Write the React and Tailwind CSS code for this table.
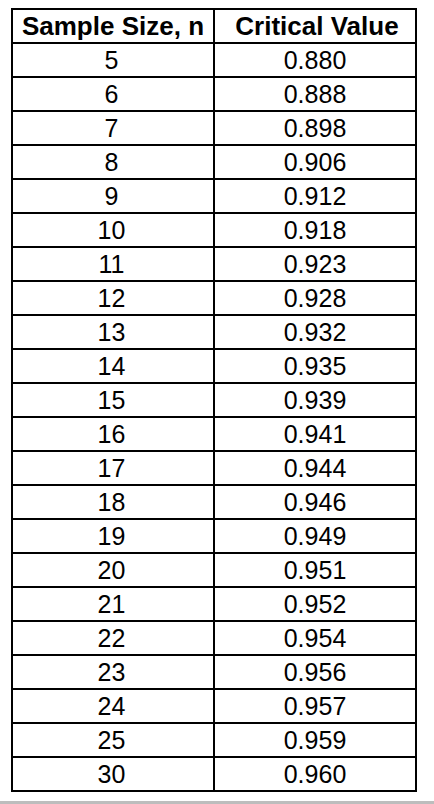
const rows = [
  [5, '0.880'],
  [6, '0.888'],
  [7, '0.898'],
  [8, '0.906'],
  [9, '0.912'],
  [10, '0.918'],
  [11, '0.923'],
  [12, '0.928'],
  [13, '0.932'],
  [14, '0.935'],
  [15, '0.939'],
  [16, '0.941'],
  [17, '0.944'],
  [18, '0.946'],
  [19, '0.949'],
  [20, '0.951'],
  [21, '0.952'],
  [22, '0.954'],
  [23, '0.956'],
  [24, '0.957'],
  [25, '0.959'],
  [30, '0.960'],
];

export default function App() {
  return (
    <div className="min-h-[804px] bg-white font-['Liberation_Sans',Arial,sans-serif] text-black">
      <div className="pl-[11px] pt-[8px]">
        <table className="w-[406px] table-fixed border-collapse border-2 border-black">
          <thead>
            <tr className="h-[34px]">
              <th className="w-1/2 border-2 border-black p-0 text-center text-[26px] font-bold leading-none">Sample Size, n</th>
              <th className="w-1/2 border-2 border-black p-0 pl-[4px] text-center text-[26px] font-bold leading-none">Critical Value</th>
            </tr>
          </thead>
          <tbody>
            {rows.map(([n, v]) => (
              <tr key={n} className="h-[34px]">
                <td className="border-2 border-black p-0 pr-[3px] text-center text-[25px] leading-none">{n}</td>
                <td className="border-2 border-black p-0 text-center text-[25px] leading-none">{v}</td>
              </tr>
            ))}
          </tbody>
        </table>
      </div>
      <div className="mt-[9px] h-[3px] w-full bg-[#bdbdbd]" />
    </div>
  );
}
